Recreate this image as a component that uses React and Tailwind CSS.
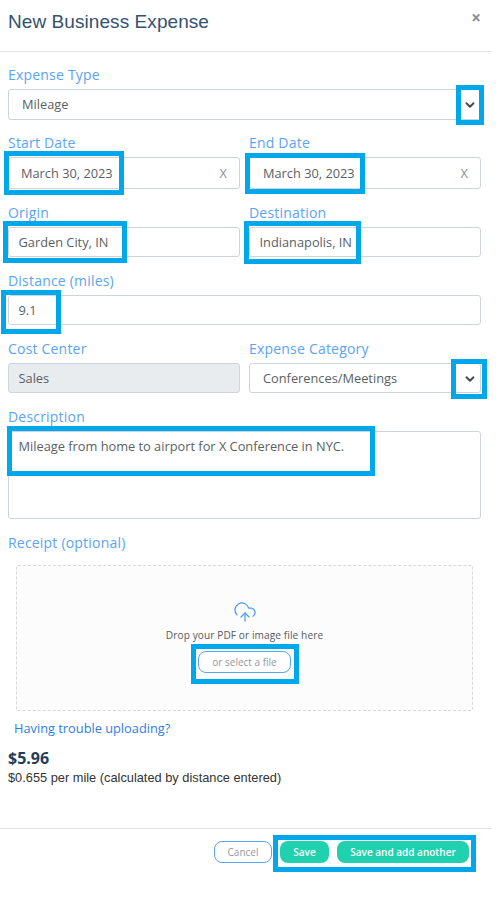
import { ChevronDown, CloudUpload } from "lucide-react";

const inputClass =
  "w-full border border-[#ced4da] rounded-[3px] text-[12.8px] text-[#5a5f64] outline-none";

function Label({ children }) {
  return <label className="block h-5 mb-1 leading-5 text-[14px] tracking-[0.2px] text-[#5ba4f2]">{children}</label>;
}

function TextField({ label, value, disabled }) {
  return (
    <div className="min-w-0">
      <Label>{label}</Label>
      <input
        readOnly
        value={value}
        className={`${inputClass} h-[30px] px-[9.5px] ${disabled ? "bg-[#e9ecef]" : "bg-white"}`}
      />
    </div>
  );
}

function DateField({ label, value, first }) {
  return (
    <div className="min-w-0">
      <Label>{label}</Label>
      <div className={`${inputClass} bg-white h-8 flex items-center justify-between pr-3 pt-[2px] ${first ? "pl-3" : "pl-[13px]"}`}>
        <span>{value}</span>
        <span className="text-[#8b9095]">X</span>
      </div>
    </div>
  );
}

function SelectField({ label, value, h }) {
  return (
    <div className="min-w-0">
      <Label>{label}</Label>
      <div className={`${inputClass} bg-white flex items-center justify-between pl-[13px] pr-[2px] pt-[1px] ${h}`}>
        <span>{value}</span>
        <ChevronDown size={14} strokeWidth={3.2} className="text-[#444a50] mr-[1px]" />
      </div>
    </div>
  );
}

const highlights = [
  "left-[456px] top-[85px] w-[28px] h-[40px]",
  "left-[4px] top-[151px] w-[120px] h-[44px]",
  "left-[245px] top-[153px] w-[120px] h-[41px]",
  "left-[3px] top-[221px] w-[124px] h-[42px]",
  "left-[244px] top-[221px] w-[117px] h-[43px]",
  "left-[1px] top-[290px] w-[60px] h-[44px]",
  "left-[451px] top-[359px] w-[36px] h-[40px]",
  "left-[7px] top-[426px] w-[368px] h-[50px]",
  "left-[191px] top-[644px] w-[108px] h-[40px]",
  "left-[273px] top-[835px] w-[203px] h-[37px]",
];

export default function App() {
  return (
    <div className="relative w-[499px] h-[899px] bg-white overflow-hidden font-['Open_Sans',sans-serif]">
      <div className="w-[492px]">
        <header className="relative h-[52px] border-b border-[#e3e5e8] pl-2 pt-[9px]">
          <h1 className="font-['Liberation_Sans',sans-serif] text-[19px] leading-[26px] tracking-[0.07px] text-[#34526f]">New Business Expense</h1>
          <span className="absolute right-[11px] top-[6px] text-[17px] leading-6 font-bold text-[#8d9196]">×</span>
        </header>

        <form className="px-2 pt-[13px] w-[489px] flex flex-col gap-[14px]">
          <div className="-mb-px">
            <SelectField label="Expense Type" value="Mileage" h="h-[31px]" />
          </div>

          <div className="grid grid-cols-2 gap-[9px]">
            <DateField label="Start Date" value="March 30, 2023" first />
            <DateField label="End Date" value="March 30, 2023" />
          </div>

          <div className="grid grid-cols-2 gap-[9px]">
            <TextField label="Origin" value="Garden City, IN" />
            <TextField label="Destination" value="Indianapolis, IN" />
          </div>

          <TextField label="Distance (miles)" value="9.1" />

          <div className="grid grid-cols-2 gap-[9px]">
            <TextField label="Cost Center" value="Sales" disabled />
            <SelectField label="Expense Category" value="Conferences/Meetings" h="h-[30px]" />
          </div>

          <div>
            <Label>Description</Label>
            <textarea
              readOnly
              value="Mileage from home to airport for X Conference in NYC."
              className={`${inputClass} bg-white block h-[88px] px-[9.5px] py-[5px] resize-none`}
            />
          </div>

          <div>
            <label className="block h-5 mb-3 leading-5 text-[14px] tracking-[0.2px] text-[#5ba4f2]">Receipt (optional)</label>
            <div className="mx-2 h-[146px] border border-dashed border-[#d8d8d8] rounded-[2px] bg-[#fcfcfc] flex flex-col items-center pt-[34px]">
              <CloudUpload size={24} strokeWidth={1.25} className="text-[#4d9df0]" />
              <p className="mt-[4px] text-[10.1px] leading-[14px] tracking-[0.1px] text-[#555b60]">Drop your PDF or image file here</p>
              <button type="button" className="mt-[9px] w-[93px] h-[22px] border border-[#5ba4f2] rounded-lg bg-white text-[10px] text-[#94989c]">
                or select a file
              </button>
            </div>
          </div>
        </form>

        <div className="px-2">
          <a className="block ml-[6px] mt-[8px] text-[12.8px] leading-[18px] text-[#2f7de1]">Having trouble uploading?</a>
          <p className="mt-[10px] text-[16px] leading-[22px] font-bold text-[#1f3d5c]">$5.96</p>
          <p className="mt-[1px] font-['Liberation_Sans',sans-serif] text-[12.8px] leading-4 text-[#333]">$0.655 per mile (calculated by distance entered)</p>
        </div>

        <footer className="mt-[42px] border-t border-[#e0e1e8] pt-3 pr-[23px] flex justify-end">
          <button type="button" className="w-[58px] h-[22px] border border-[#5ba4f2] rounded-lg bg-white text-[10px] text-[#94989c]">Cancel</button>
          <button type="button" className="ml-2 w-[49px] h-[22px] rounded-lg bg-[#1fd1ae] text-[10px] font-semibold text-white">Save</button>
          <button type="button" className="ml-2 w-[132px] h-[22px] rounded-lg bg-[#1fd1ae] text-[10px] font-semibold text-white">Save and add another</button>
        </footer>
      </div>

      {highlights.map((h) => (
        <div key={h} className={`absolute border-[5px] border-[#00a7eb] pointer-events-none ${h}`} />
      ))}
    </div>
  );
}
